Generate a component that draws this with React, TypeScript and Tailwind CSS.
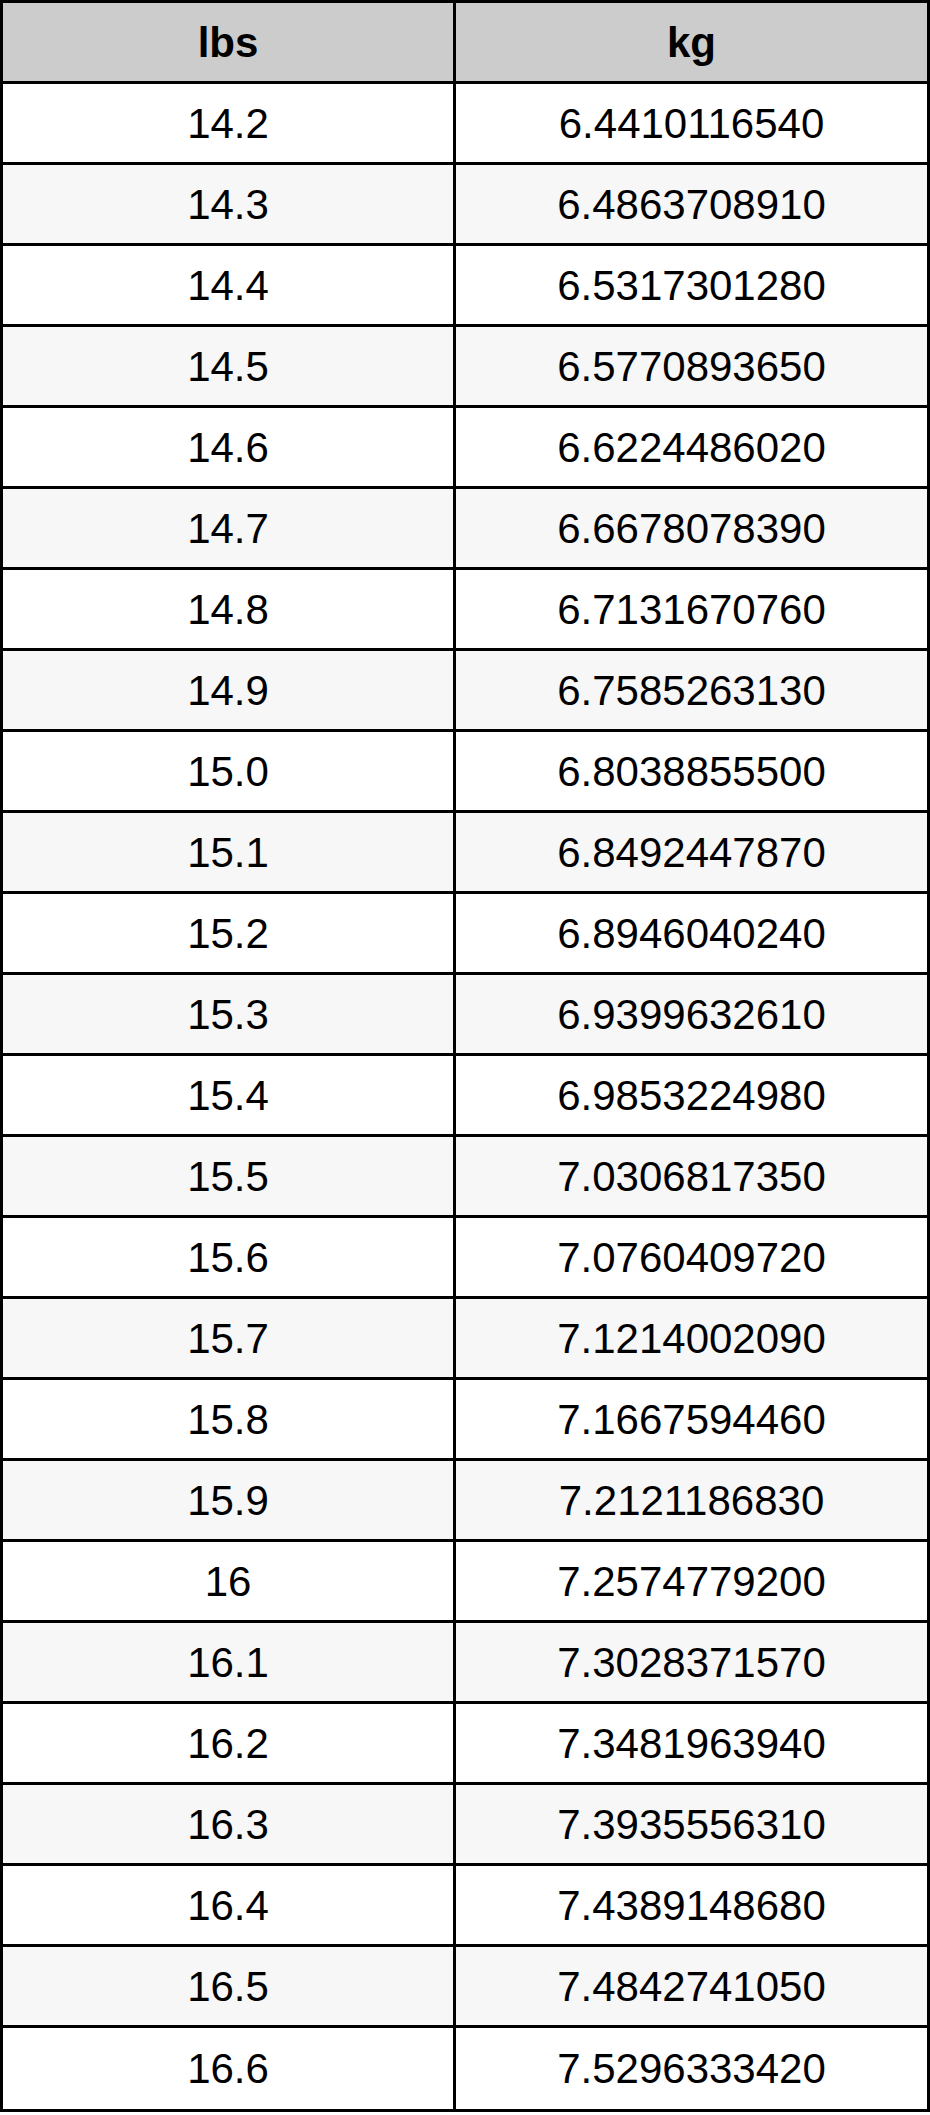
import React from "react";

const rows: [string, string][] = [
  ["14.2", "6.4410116540"],
  ["14.3", "6.4863708910"],
  ["14.4", "6.5317301280"],
  ["14.5", "6.5770893650"],
  ["14.6", "6.6224486020"],
  ["14.7", "6.6678078390"],
  ["14.8", "6.7131670760"],
  ["14.9", "6.7585263130"],
  ["15.0", "6.8038855500"],
  ["15.1", "6.8492447870"],
  ["15.2", "6.8946040240"],
  ["15.3", "6.9399632610"],
  ["15.4", "6.9853224980"],
  ["15.5", "7.0306817350"],
  ["15.6", "7.0760409720"],
  ["15.7", "7.1214002090"],
  ["15.8", "7.1667594460"],
  ["15.9", "7.2121186830"],
  ["16", "7.2574779200"],
  ["16.1", "7.3028371570"],
  ["16.2", "7.3481963940"],
  ["16.3", "7.3935556310"],
  ["16.4", "7.4389148680"],
  ["16.5", "7.4842741050"],
  ["16.6", "7.5296333420"],
];

export default function App() {
  return (
    <div className="w-[930px] bg-white font-['Liberation_Sans',Arial,sans-serif] text-black">
      <div className="border-[3px] border-black flex flex-col">
        <div className="flex h-[81px] border-b-[3px] border-black bg-[#cccccc] text-[42px] font-bold">
          <div className="w-[453px] border-r-[3px] border-black flex items-center justify-center">lbs</div>
          <div className="flex-1 flex items-center justify-center">kg</div>
        </div>
        {rows.map(([a, b], i) => (
          <div
            key={a}
            className={`flex h-[81px] text-[42px] ${i < rows.length - 1 ? "border-b-[3px] border-black" : "h-[78px]"} ${i % 2 === 1 ? "bg-[#f7f7f7]" : "bg-white"}`}
          >
            <div className="w-[453px] border-r-[3px] border-black flex items-center justify-center">{a}</div>
            <div className="flex-1 flex items-center justify-center">{b}</div>
          </div>
        ))}
      </div>
    </div>
  );
}
